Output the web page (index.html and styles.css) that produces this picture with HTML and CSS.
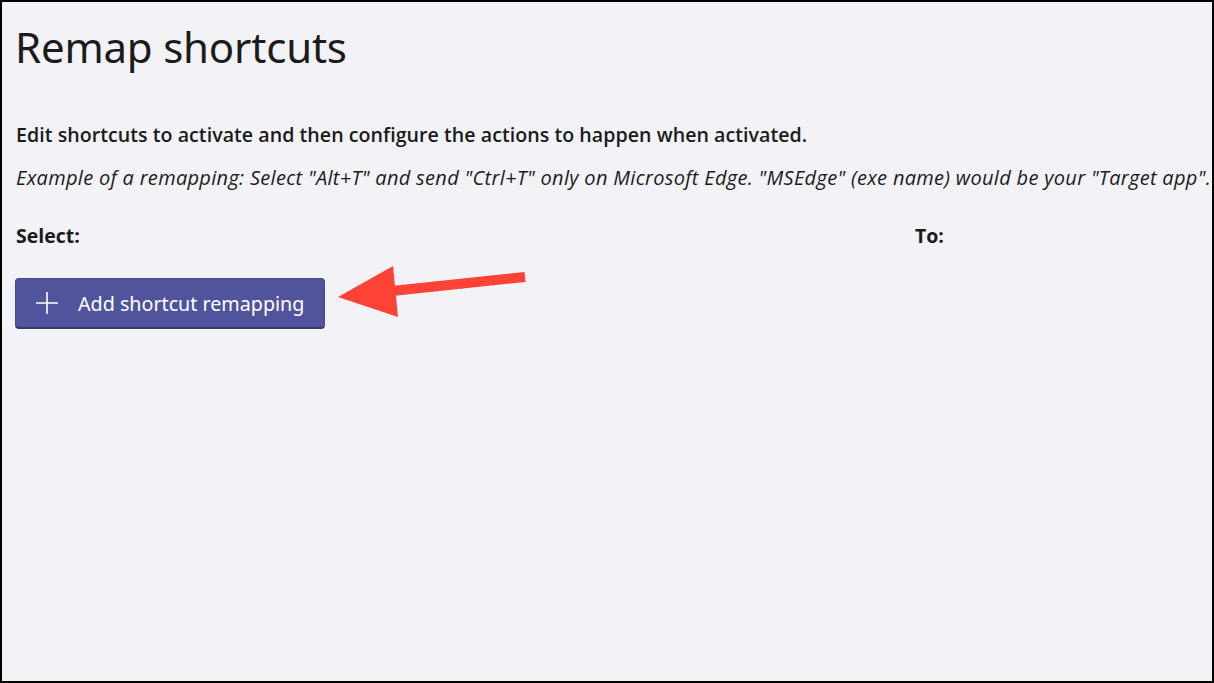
FILE: index.html
```html
<!DOCTYPE html>
<html lang="en">
<head>
<meta charset="utf-8">
<title>Remap shortcuts</title>
<link rel="stylesheet" href="styles.css">
</head>
<body>
<div class="page">
  <h1 class="title">Remap shortcuts</h1>
  <p class="lead">Edit shortcuts to activate and then configure the actions to happen when activated.</p>
  <p class="example">Example of a remapping: Select "Alt+T" and send "Ctrl+T" only on Microsoft Edge. "MSEdge" (exe name) would be your "Target app".</p>
  <div class="cols">
    <span class="col-label select">Select:</span>
    <span class="col-label to">To:</span>
  </div>
  <div class="actions">
    <button class="add-btn" type="button">
      <svg class="plus" width="24" height="24" viewBox="0 0 24 24" aria-hidden="true">
        <path d="M12 1v22M1 12h22" stroke="#fff" stroke-width="1.6" fill="none"/>
      </svg>
      <span>Add shortcut remapping</span>
    </button>
  </div>
  <svg class="arrow" width="1214" height="683" viewBox="0 0 1214 683" aria-hidden="true">
    <path d="M525 277 L392 291" stroke="#fd4236" stroke-width="10" fill="none"/>
    <polygon points="338,297 393,266 398,317" fill="#fd4236"/>
  </svg>
</div>
</body>
</html>
```
FILE: styles.css
```css
html, body {
  margin: 0;
  padding: 0;
}
body {
  font-family: "Open Sans", "Noto Sans", sans-serif;
  color: #1b1b1b;
  background: #f2f2f7;
}
.page {
  position: relative;
  box-sizing: border-box;
  width: 1214px;
  height: 683px;
  border: 2px solid #000;
  background: #f2f2f7;
  padding: 0 0 0 14px;
  overflow: hidden;
}
.title {
  margin: 19px 0 0 -1px;
  font-family: "Noto Sans", sans-serif;
  font-size: 42px;
  font-weight: 400;
  line-height: 52px;
  letter-spacing: -0.2px;
}
.lead {
  margin: 48px 0 0 0;
  font-size: 19.6px;
  font-weight: 600;
  line-height: 27px;
  letter-spacing: 0.04px;
  white-space: nowrap;
}
.example {
  margin: 16px 0 0 0;
  font-size: 20px;
  font-style: italic;
  line-height: 27px;
  letter-spacing: 0.31px;
  white-space: nowrap;
}
.cols {
  display: grid;
  grid-template-columns: 899px auto;
  margin-top: 31px;
  font-size: 19.5px;
  font-weight: 700;
  line-height: 27px;
}
.actions {
  margin: 29px 0 0 -1px;
}
.add-btn {
  display: flex;
  align-items: center;
  gap: 19px;
  box-sizing: border-box;
  width: 310px;
  height: 51px;
  padding: 0 0 0 19px;
  border: 1px solid #474a92;
  border-bottom: 2px solid #36386f;
  border-radius: 4px;
  background: #51549d;
  color: #fff;
  font-family: "Noto Sans", sans-serif;
  font-size: 19.7px;
  cursor: pointer;
}
.plus {
  flex: none;
}
.arrow {
  position: absolute;
  left: -2px;
  top: -2px;
  pointer-events: none;
}
```
